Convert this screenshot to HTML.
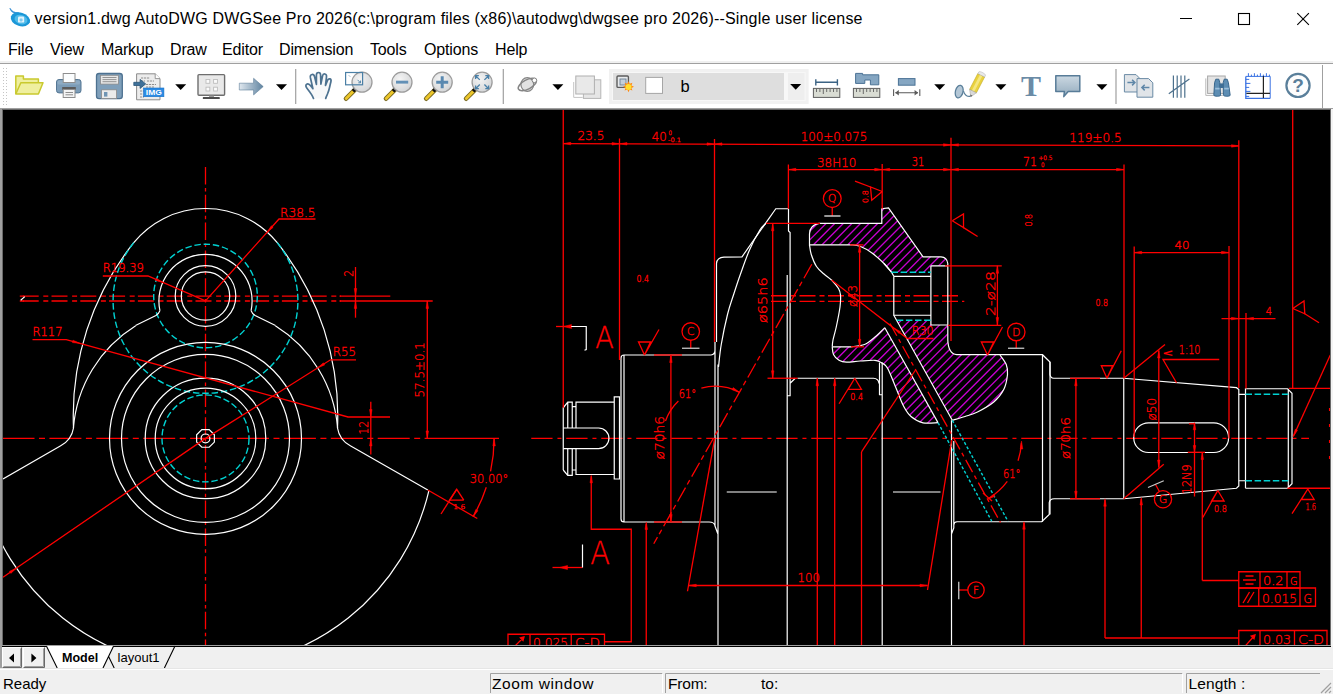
<!DOCTYPE html>
<html><head><meta charset="utf-8"><title>version1.dwg AutoDWG DWGSee Pro 2026</title>
<style>
html,body{margin:0;padding:0;width:1333px;height:694px;overflow:hidden;background:#fff;font-family:"Liberation Sans",sans-serif;color:#000}
#app{position:absolute;left:0;top:0;width:1333px;height:694px;overflow:hidden;background:#fff}
.abs{position:absolute;white-space:nowrap}
#title{left:34.5px;top:10px;font-size:16px;line-height:18px;letter-spacing:0.18px}
.menu span{position:absolute;top:41px;font-size:16px;line-height:18px;white-space:nowrap;letter-spacing:-0.15px}
#tbline{left:0;top:63px;width:1333px;height:1px;background:#a0a0a0}
#toolbar{left:0;top:64px;width:1333px;height:43px;background:#fff}
#tbshadow{display:none}
#canvasbg{left:0;top:108px;width:1333px;height:538px;background:#000}
#tabbar{left:0;top:645px;width:1333px;height:23px;background:#f0f0f0}
#status{left:0;top:668px;width:1333px;height:26px;background:#f0f0f0}
.st{position:absolute;font-size:15.5px;line-height:18px;top:675px;white-space:nowrap}
svg{position:absolute;left:0;top:0}
</style></head><body>
<div id="app">
<div id="title" class="abs">version1.dwg AutoDWG DWGSee Pro 2026(c:\program files (x86)\autodwg\dwgsee pro 2026)--Single user license</div>
<div class="menu">
<span style="left:8px">File</span><span style="left:50px">View</span><span style="left:101px">Markup</span><span style="left:170px">Draw</span><span style="left:222px">Editor</span><span style="left:279px">Dimension</span><span style="left:370px">Tools</span><span style="left:424px">Options</span><span style="left:495px">Help</span>
</div>
<div id="tbline" class="abs"></div>
<div id="toolbar" class="abs"></div>
<div id="tbshadow" class="abs"></div>
<div id="canvasbg" class="abs"></div>
<div id="tabbar" class="abs"></div>
<div id="status" class="abs"></div>
<span class="st" style="left:3px;font-size:15px">Ready</span>
<span class="st" style="left:492px;letter-spacing:0.58px">Zoom window</span>
<span class="st" style="left:668px;letter-spacing:-0.2px">From:</span>
<span class="st" style="left:761px">to:</span>
<span class="st" style="left:1188.5px;letter-spacing:0.1px">Length :</span>
<svg id="cad" width="1333" height="694" viewBox="0 0 1333 694" fill="none" stroke-width="1.3" font-family="'DejaVu Sans Light','DejaVu Sans','Liberation Sans',sans-serif" font-weight="200">
<clipPath id="cv"><rect x="3" y="110" width="1327.5" height="535"/></clipPath>
<g clip-path="url(#cv)">
<g id="left-view">
<line x1="205.5" y1="167" x2="205.5" y2="645" stroke="#ff0000" stroke-dasharray="17.5 3.4 3.5 3.4"/>
<path d="M22.7,296.1H341M22.7,301H341" stroke="#ff0000" stroke-dasharray="16 4.6 5 3.2"/>
<path d="M19.8,296.1H24M19.8,301H24" stroke="#ff0000"/>
<line x1="340" y1="296.1" x2="390.3" y2="296.1" stroke="#ff0000"/>
<line x1="340" y1="301" x2="432.7" y2="301" stroke="#ff0000"/>
<line x1="20.7" y1="300.2" x2="24.8" y2="296.6" stroke="#ffffff" stroke-width="1.2"/>
<line x1="2.5" y1="438.4" x2="442" y2="438.4" stroke="#ff0000" stroke-dasharray="32 4.5 6 4.4"/>
<line x1="442" y1="438.4" x2="499" y2="438.4" stroke="#ff0000"/>
<circle cx="205.5" cy="296" r="24.2" stroke="#ffffff" stroke-width="1.2"/>
<circle cx="205.5" cy="296" r="30.3" stroke="#ffffff" stroke-width="1.2"/>
<circle cx="205.5" cy="296" r="51.8" stroke="#00d2d2" stroke-dasharray="6.5 2.8" stroke-width="1.4"/>
<path d="M159.92,310.59A46.6,46.6 0 1 1 251.08,310.59" stroke="#ffffff" stroke-width="1.2"/>
<path d="M159.92,310.59Q158.92,313.59 155.92,315.59L135.5,325.5" stroke="#ffffff" stroke-width="1.2"/>
<path d="M251.08,310.59Q252.08,313.59 255.08,315.59L275.5,325.5" stroke="#ffffff" stroke-width="1.2"/>
<path d="M135.68,325.79A132.5,132.5 0 0 0 73.41,427.99" stroke="#ffffff" stroke-width="1.2"/>
<path d="M275.32,325.79A132.5,132.5 0 0 1 337.59,427.99" stroke="#ffffff" stroke-width="1.2"/>
<path d="M73.5,428A278.0,278.0 0 0 1 133.77,242.66A92.4,92.4 0 0 1 277.23,242.66A278.0,278.0 0 0 1 337.5,428" stroke="#ffffff" stroke-width="1.2"/>
<path d="M133.77,242.66A92.4,92.4 0 1 0 277.23,242.66" stroke="#00d2d2" stroke-dasharray="6.5 2.8" stroke-width="1.4"/>
<path d="M337.5,428Q339.5,440 350.3,445.8L427.8,490" stroke="#ffffff" stroke-width="1.2"/>
<path d="M73.5,428Q71.5,440 60.7,445.8L3,479" stroke="#ffffff" stroke-width="1.2"/>
<path d="M428.96,490.27A229.4,229.4 0 0 1 -17.96,490.27" stroke="#ffffff" stroke-width="1.2"/>
<circle cx="205.5" cy="438.4" r="96" stroke="#ffffff" stroke-width="1.2"/>
<circle cx="205.5" cy="438.4" r="84" stroke="#ffffff" stroke-width="1.2"/>
<circle cx="205.5" cy="438.4" r="60.3" stroke="#ffffff" stroke-width="1.2"/>
<circle cx="205.5" cy="438.4" r="50.3" stroke="#ffffff" stroke-width="1.2"/>
<circle cx="205.5" cy="438.4" r="43.5" stroke="#00d2d2" stroke-dasharray="6.5 2.8" stroke-width="1.4"/>
<circle cx="205.5" cy="438.4" r="4.4" stroke="#ffffff" stroke-width="1.2"/>
<polygon points="214.37,434.73 209.17,429.53 201.83,429.53 196.63,434.73 196.63,442.07 201.83,447.27 209.17,447.27 214.37,442.07" stroke="#ffffff" stroke-width="1.2"/>
<polyline points="315.5,219 279,219 205.5,300.9" stroke="#ff0000"/>
<polygon points="267.21,232.13 271.29,225.72 273.15,227.39" fill="#ff0000" stroke="#ff0000" stroke-width="0.5"/>
<text x="280" y="216.5" font-size="12.8" fill="#ff0000" stroke="#ff0000" stroke-width="0.35" textLength="35.5" lengthAdjust="spacingAndGlyphs">R38.5</text>
<polyline points="102.8,276 148,276 205.5,300.9" stroke="#ff0000"/>
<polygon points="162.74,282.38 155.36,280.55 156.35,278.25" fill="#ff0000" stroke="#ff0000" stroke-width="0.5"/>
<text x="102.8" y="272.3" font-size="11.5" fill="#ff0000" stroke="#ff0000" stroke-width="0.35" textLength="41" lengthAdjust="spacingAndGlyphs">R19.39</text>
<polyline points="32.5,339.6 66.25,339.6 348,417 390,417" stroke="#ff0000"/>
<polygon points="79.93,343.36 72.37,342.58 73.03,340.17" fill="#ff0000" stroke="#ff0000" stroke-width="0.5"/>
<text x="32.5" y="336" font-size="11.5" fill="#ff0000" stroke="#ff0000" stroke-width="0.35" textLength="30" lengthAdjust="spacingAndGlyphs">R117</text>
<polyline points="356,359.8 330.5,359.8 205.5,438.4 3,577.3" stroke="#ff0000"/>
<polygon points="317.67,367.87 323.35,362.82 324.68,364.93" fill="#ff0000" stroke="#ff0000" stroke-width="0.5"/>
<polygon points="16.33,568.16 10.85,573.43 9.43,571.37" fill="#ff0000" stroke="#ff0000" stroke-width="0.5"/>
<text x="332.8" y="356" font-size="12.5" fill="#ff0000" stroke="#ff0000" stroke-width="0.35" textLength="23.2" lengthAdjust="spacingAndGlyphs">R55</text>
<line x1="355.5" y1="267" x2="355.5" y2="317.7" stroke="#ff0000"/>
<polygon points="355.5,296 354.25,288.5 356.75,288.5" fill="#ff0000" stroke="#ff0000" stroke-width="0.5"/>
<polygon points="355.5,300.9 356.75,308.4 354.25,308.4" fill="#ff0000" stroke="#ff0000" stroke-width="0.5"/>
<text x="353" y="276.8" font-size="12.5" fill="#ff0000" stroke="#ff0000" stroke-width="0.35" textLength="6.8" lengthAdjust="spacingAndGlyphs" transform="rotate(-90 353 276.8)">2</text>
<line x1="427.3" y1="300.9" x2="427.3" y2="438.4" stroke="#ff0000"/>
<polygon points="427.3,300.9 428.55,308.4 426.05,308.4" fill="#ff0000" stroke="#ff0000" stroke-width="0.5"/>
<polygon points="427.3,438.4 426.05,430.9 428.55,430.9" fill="#ff0000" stroke="#ff0000" stroke-width="0.5"/>
<text x="424.3" y="397.5" font-size="12.5" fill="#ff0000" stroke="#ff0000" stroke-width="0.35" textLength="55.3" lengthAdjust="spacingAndGlyphs" transform="rotate(-90 424.3 397.5)">57.5±0.1</text>
<line x1="370.8" y1="401.7" x2="370.8" y2="454.5" stroke="#ff0000"/>
<polygon points="370.8,417 369.55,409.5 372.05,409.5" fill="#ff0000" stroke="#ff0000" stroke-width="0.5"/>
<polygon points="370.8,438.4 372.05,445.9 369.55,445.9" fill="#ff0000" stroke="#ff0000" stroke-width="0.5"/>
<text x="367.5" y="434.5" font-size="13" fill="#ff0000" stroke="#ff0000" stroke-width="0.35" textLength="13.7" lengthAdjust="spacingAndGlyphs" transform="rotate(-90 367.5 434.5)">12</text>
<line x1="427.8" y1="490" x2="477.3" y2="518.5" stroke="#ff0000"/>
<path d="M494.1,438.4A156.5,156.5 0 0 1 490.57,471.47" stroke="#ff0000"/>
<path d="M486.27,487.28A156.5,156.5 0 0 1 473.13,516.65" stroke="#ff0000"/>
<polygon points="494.1,438.4 495.35,445.9 492.85,445.9" fill="#ff0000" stroke="#ff0000" stroke-width="0.5"/>
<polygon points="473.13,516.65 475.8,509.53 477.97,510.78" fill="#ff0000" stroke="#ff0000" stroke-width="0.5"/>
<text x="469.8" y="483.3" font-size="12.5" fill="#ff0000" stroke="#ff0000" stroke-width="0.35" textLength="38.5" lengthAdjust="spacingAndGlyphs">30.00°</text>
<polyline points="463.8,500.2 449.5,500.2 456.7,489.3 463.8,500.2" stroke="#ff0000"/>
<line x1="456.7" y1="489.3" x2="441" y2="514" stroke="#ff0000"/>
<text x="453.3" y="508.8" font-size="6.5" fill="#ff0000" stroke="#ff0000" stroke-width="0.35" textLength="12" lengthAdjust="spacingAndGlyphs">1.6</text>
</g>
<g id="right-view">
<line x1="531.25" y1="438.4" x2="1309" y2="438.4" stroke="#ff0000" stroke-dasharray="21.3 4.9 4 4.8"/>
<path d="M771,295.75H962M771,301.3H964.3" stroke="#ff0000" stroke-dasharray="16 4 5 3.5"/>
<path d="M563.25,470V407.75L567.75,402.2H572.25V428M572.25,448.7V475.3H567.75L563.25,470M567.75,402.2V428M567.75,448.7V475.3M572.25,406.7H576M572.25,470H576M576,428V402.2H614.25M576,448.7V474.5H614.25M614.25,396.8H619.5V479H614.25Z" stroke="#ffffff" stroke-width="1.2"/>
<path d="M563.25,428H598.6A10.35,10.35 0 0 1 598.6,448.7H563.25" stroke="#ffffff" stroke-width="1.2"/>
<path d="M621,519V358Q621,355 624,355H711Q715,354.5 715,350V342M621,519Q621,522 624,522H709Q714.5,522 715,526L717.8,533.7M624,355V522M715,342V526M718,364.5V645" stroke="#ffffff" stroke-width="1.2"/>
<path d="M788.5,208.75H775.8L742,256.8L724,257.2Q717,257.6 716.5,263.5V342" stroke="#ffffff" stroke-width="1.2"/>
<path d="M766,223.3C765,224.38 762.75,225.35 760,229.8C757.25,234.25 752.75,242.63 749.5,250C746.25,257.37 743.12,266.67 740.5,274C737.88,281.33 735.97,287.25 733.8,294C731.63,300.75 729.59,306.08 727.5,314.5C725.41,322.92 722.75,335.75 721.25,344.5C719.75,353.25 718.96,363.25 718.5,367" stroke="#ffffff" stroke-width="1.2"/>
<path d="M788.5,208.75V231L790.1,232.5V395.75H787.2M787.2,275V645M790.1,383.3L795.3,378.25" stroke="#ffffff" stroke-width="1.2"/>
<path d="M797.5,378.25H873.5Q878.3,378.6 878.9,382.8L879.5,384M879.5,362.5V394.75H882.2M882.2,362.5V645" stroke="#ffffff" stroke-width="1.2"/>
<clipPath id="hc"><path d="M812,227Q809.5,229.5 809.5,234V244.8H851L851,244.8C852.5,245.05 856.5,244.93 860,246.3C863.5,247.67 868,250.13 872,253C876,255.87 880.75,260.3 884,263.5C887.25,266.7 890.25,270.75 891.5,272.2H930.9V265.8H947.8V263.5Q947,257.2 941,256.8H923L888.5,208L881.8,208.75V223.3H819.5Q815,223.6 812,227Z"/><path d="M832.25,346.8H851L851,346.8C853.25,346.42 860.5,346.13 864.5,344.5C868.5,342.87 872.25,339.17 875,337C877.75,334.83 879.37,333.05 881,331.5C882.63,329.95 884.17,328.33 884.8,327.7L938,422.6L938,422.6C935.5,422.63 927.5,423.82 923,422.8C918.5,421.78 914.25,419.3 911,416.5C907.75,413.7 906,410.75 903.5,406C901,401.25 898.5,394 896,388C893.5,382 890.33,373.83 888.5,370C886.67,366.17 886.25,366.25 885,365C883.75,363.75 882.67,363.28 881,362.5C879.33,361.72 878.5,360.55 875,360.3C871.5,360.05 864.75,360.68 860,361C855.25,361.32 850,362.32 846.5,362.2C843,362.08 841.17,361.58 839,360.3C836.83,359.02 834.62,356.75 833.5,354.5C832.38,352.25 832.46,348.08 832.25,346.8Z"/><path d="M896.2,320.2H930.9V325H947.8V340Q948.3,353.8 956.8,354.7H1000L1000,355C1001.04,356.58 1005,361.25 1006.25,364.5C1007.5,367.75 1007.92,370.33 1007.5,374.5C1007.08,378.67 1006.04,384.92 1003.75,389.5C1001.46,394.08 998.12,398.25 993.75,402C989.38,405.75 982.29,409.58 977.5,412C972.71,414.42 969.2,415.12 965,416.5C960.8,417.88 954.42,419.67 952.3,420.3Z"/></clipPath>
<path d="M593.8,430L823.8,200M602.4,430L832.4,200M611,430L841,200M619.6,430L849.6,200M628.2,430L858.2,200M636.8,430L866.8,200M645.4,430L875.4,200M654,430L884,200M662.6,430L892.6,200M671.2,430L901.2,200M679.8,430L909.8,200M688.4,430L918.4,200M697,430L927,200M705.6,430L935.6,200M714.2,430L944.2,200M722.8,430L952.8,200M731.4,430L961.4,200M740,430L970,200M748.6,430L978.6,200M757.2,430L987.2,200M765.8,430L995.8,200M774.4,430L1004.4,200M783,430L1013,200M791.6,430L1021.6,200M800.2,430L1030.2,200M808.8,430L1038.8,200M817.4,430L1047.4,200M826,430L1056,200M834.6,430L1064.6,200M843.2,430L1073.2,200M851.8,430L1081.8,200M860.4,430L1090.4,200M869,430L1099,200M877.6,430L1107.6,200M886.2,430L1116.2,200M894.8,430L1124.8,200M903.4,430L1133.4,200M912,430L1142,200M920.6,430L1150.6,200M929.2,430L1159.2,200M937.8,430L1167.8,200M946.4,430L1176.4,200M955,430L1185,200M963.6,430L1193.6,200M972.2,430L1202.2,200M980.8,430L1210.8,200M989.4,430L1219.4,200M998,430L1228,200M1006.6,430L1236.6,200M1015.2,430L1245.2,200M1023.8,430L1253.8,200M1032.4,430L1262.4,200M1041,430L1271,200M1049.6,430L1279.6,200M1058.2,430L1288.2,200M1066.8,430L1296.8,200" stroke="#c400cc" stroke-width="1.35" clip-path="url(#hc)"/>
<path d="M891.5,272.2L884,263.5" stroke="#ffffff" stroke-width="1.2"/>
<path d="M812,227Q809.5,229.5 809.5,234V244.8H851L851,244.8C852.5,245.05 856.5,244.93 860,246.3C863.5,247.67 868,250.13 872,253C876,255.87 880.75,260.3 884,263.5C887.25,266.7 890.25,270.75 891.5,272.2L893.8,276.3" stroke="#ffffff" stroke-width="1.2"/>
<path d="M812,227Q815,223.6 819.5,223.3H881.8V208.75L888.5,208L923,256.8H941Q947,257.2 947.8,263.5V340Q948.3,353.8 956.8,354.7H1042.5L1050,362V374.5Q1050.3,378 1053.75,378.25H1123.75" stroke="#ffffff" stroke-width="1.2"/>
<path d="M930.9,265.8H947.8M930.9,265.8V325H947.8M893.8,276.3H930.9M893.8,276.3V315.25H930.9" stroke="#ffffff" stroke-width="1.2"/>
<path d="M809.5,244.8C809.79,246.42 810.08,250.88 811.25,254.5C812.42,258.12 814.38,263.25 816.5,266.5C818.62,269.75 821.5,271.75 824,274C826.5,276.25 829.08,277.58 831.5,280C833.92,282.42 837,286 838.5,288.5C840,291 840.25,291.92 840.5,295C840.75,298.08 840.71,301.67 840,307C839.29,312.33 837.42,321.5 836.25,327C835.08,332.5 833.67,336.7 833,340C832.33,343.3 832.38,345.67 832.25,346.8" stroke="#ffffff" stroke-width="1.2"/>
<path d="M832.25,346.8H851L851,346.8C853.25,346.42 860.5,346.13 864.5,344.5C868.5,342.87 872.25,339.17 875,337C877.75,334.83 879.37,333.05 881,331.5C882.63,329.95 884.17,328.33 884.8,327.7" stroke="#ffffff" stroke-width="1.2"/>
<path d="M884.8,327.7L938,422.6M893.8,315.25L952.3,420.3" stroke="#ffffff" stroke-width="1.2"/>
<path d="M938,422.6L938,422.6C935.5,422.63 927.5,423.82 923,422.8C918.5,421.78 914.25,419.3 911,416.5C907.75,413.7 906,410.75 903.5,406C901,401.25 898.5,394 896,388C893.5,382 890.33,373.83 888.5,370C886.67,366.17 886.25,366.25 885,365C883.75,363.75 882.67,363.28 881,362.5C879.33,361.72 878.5,360.55 875,360.3C871.5,360.05 864.75,360.68 860,361C855.25,361.32 850,362.32 846.5,362.2C843,362.08 841.17,361.58 839,360.3C836.83,359.02 834.62,356.75 833.5,354.5C832.38,352.25 832.46,348.08 832.25,346.8" stroke="#ffffff" stroke-width="1.2"/>
<path d="M1000,355L1000,355C1001.04,356.58 1005,361.25 1006.25,364.5C1007.5,367.75 1007.92,370.33 1007.5,374.5C1007.08,378.67 1006.04,384.92 1003.75,389.5C1001.46,394.08 998.12,398.25 993.75,402C989.38,405.75 982.29,409.58 977.5,412C972.71,414.42 969.2,415.12 965,416.5C960.8,417.88 954.42,419.67 952.3,420.3" stroke="#ffffff" stroke-width="1.2"/>
<path d="M1042.5,355V521.75M1050,362V514.5M1123.75,378.25V498.75" stroke="#ffffff" stroke-width="1.2"/>
<path d="M951.5,420.3V645M953.8,441V525M951.5,534L953.8,528V525Q954,521.9 957,521.75H1041.75L1049.25,514.5V502.5Q1049.6,499 1054.25,498.75H1123.75L1236.5,488.25L1238.8,486V389.5L1236.5,387.7L1123.75,378.25" stroke="#ffffff" stroke-width="1.2"/>
<path d="M1238.8,394.3H1245.5M1238.8,480.75H1245.5M1245.5,488.25V388.75H1287.5L1292,393.25V483.75L1287.5,488.25H1245.5M1288.3,388.75V488.25" stroke="#ffffff" stroke-width="1.2"/>
<path d="M1148.6,422.8H1213.75A14.85,14.85 0 0 1 1213.75,452.5H1148.6A14.85,14.85 0 0 1 1148.6,422.8Z" stroke="#ffffff" stroke-width="1.2"/>
<line x1="726.75" y1="492" x2="776.75" y2="492" stroke="#ffffff" stroke-width="1.2"/>
<line x1="893" y1="492" x2="940.5" y2="492" stroke="#ffffff" stroke-width="1.2"/>
<line x1="891.5" y1="272.2" x2="930.9" y2="272.2" stroke="#00d2d2" stroke-dasharray="6.5 2.6" stroke-width="1.4"/>
<line x1="896.8" y1="320.2" x2="930.9" y2="320.2" stroke="#00d2d2" stroke-dasharray="6.5 2.6" stroke-width="1.4"/>
<line x1="1245.5" y1="394.3" x2="1288.3" y2="394.3" stroke="#00d2d2" stroke-dasharray="6.5 2.6" stroke-width="1.4"/>
<line x1="1245.5" y1="480.75" x2="1288.3" y2="480.75" stroke="#00d2d2" stroke-dasharray="6.5 2.6" stroke-width="1.4"/>
<line x1="938" y1="422.6" x2="991.75" y2="521.25" stroke="#00d2d2" stroke-dasharray="3 2" stroke-width="1.4"/>
<line x1="952.3" y1="420.3" x2="1008" y2="521.25" stroke="#00d2d2" stroke-dasharray="3 2" stroke-width="1.4"/>
<line x1="563.25" y1="110" x2="563.25" y2="407.75" stroke="#ff0000"/>
<line x1="619.5" y1="138.5" x2="619.5" y2="360" stroke="#ff0000"/>
<line x1="714.5" y1="139" x2="714.5" y2="342" stroke="#ff0000"/>
<line x1="788.4" y1="164.5" x2="788.4" y2="208.75" stroke="#ff0000"/>
<line x1="882.2" y1="164" x2="882.2" y2="208.75" stroke="#ff0000"/>
<line x1="951" y1="137.75" x2="951" y2="341" stroke="#ff0000"/>
<line x1="1124" y1="164.5" x2="1124" y2="378.25" stroke="#ff0000"/>
<line x1="1134.2" y1="246.5" x2="1134.2" y2="437" stroke="#ff0000"/>
<line x1="1229" y1="246" x2="1229" y2="438.4" stroke="#ff0000"/>
<line x1="1238.8" y1="140.2" x2="1238.8" y2="388" stroke="#ff0000"/>
<line x1="1246" y1="313" x2="1246" y2="388.5" stroke="#ff0000"/>
<line x1="1292.7" y1="110" x2="1292.7" y2="388.5" stroke="#ff0000"/>
<line x1="817.3" y1="378.25" x2="817.3" y2="645" stroke="#ff0000"/>
<line x1="834.7" y1="378.25" x2="834.7" y2="645" stroke="#ff0000"/>
<line x1="861.5" y1="451.8" x2="861.5" y2="645" stroke="#ff0000"/>
<line x1="646.25" y1="523.75" x2="646.25" y2="645" stroke="#ff0000"/>
<line x1="1024" y1="522.5" x2="1024" y2="645" stroke="#ff0000"/>
<line x1="1105" y1="500" x2="1105" y2="638" stroke="#ff0000"/>
<line x1="1141.25" y1="498.75" x2="1141.25" y2="638" stroke="#ff0000"/>
<line x1="1202.3" y1="452.5" x2="1202.3" y2="580.5" stroke="#ff0000"/>
<polygon points="817.3,378.25 818.55,385.75 816.05,385.75" fill="#ff0000" stroke="#ff0000" stroke-width="0.5"/>
<polygon points="834.7,378.25 835.95,385.75 833.45,385.75" fill="#ff0000" stroke="#ff0000" stroke-width="0.5"/>
<polygon points="646.25,522 647.5,529.5 645,529.5" fill="#ff0000" stroke="#ff0000" stroke-width="0.5"/>
<polygon points="1024,521.75 1025.25,529.25 1022.75,529.25" fill="#ff0000" stroke="#ff0000" stroke-width="0.5"/>
<polygon points="1105,498.75 1106.25,506.25 1103.75,506.25" fill="#ff0000" stroke="#ff0000" stroke-width="0.5"/>
<polygon points="1141.25,497.5 1142.5,505 1140,505" fill="#ff0000" stroke="#ff0000" stroke-width="0.5"/>
<line x1="772.7" y1="223.3" x2="772.7" y2="378.25" stroke="#ff0000"/>
<polygon points="772.7,223.3 773.95,230.8 771.45,230.8" fill="#ff0000" stroke="#ff0000" stroke-width="0.5"/>
<polygon points="772.7,378.25 771.45,370.75 773.95,370.75" fill="#ff0000" stroke="#ff0000" stroke-width="0.5"/>
<line x1="859.6" y1="244.8" x2="859.6" y2="346.8" stroke="#ff0000"/>
<polygon points="859.6,244.8 860.85,252.3 858.35,252.3" fill="#ff0000" stroke="#ff0000" stroke-width="0.5"/>
<polygon points="859.6,346.8 858.35,339.3 860.85,339.3" fill="#ff0000" stroke="#ff0000" stroke-width="0.5"/>
<line x1="997.4" y1="265.8" x2="997.4" y2="325" stroke="#ff0000"/>
<polygon points="997.4,265.8 998.65,273.3 996.15,273.3" fill="#ff0000" stroke="#ff0000" stroke-width="0.5"/>
<polygon points="997.4,325 996.15,317.5 998.65,317.5" fill="#ff0000" stroke="#ff0000" stroke-width="0.5"/>
<line x1="670.9" y1="355" x2="670.9" y2="522" stroke="#ff0000"/>
<polygon points="670.9,355 672.15,362.5 669.65,362.5" fill="#ff0000" stroke="#ff0000" stroke-width="0.5"/>
<polygon points="670.9,522 669.65,514.5 672.15,514.5" fill="#ff0000" stroke="#ff0000" stroke-width="0.5"/>
<line x1="1075.9" y1="378.25" x2="1075.9" y2="498.75" stroke="#ff0000"/>
<polygon points="1075.9,378.25 1077.15,385.75 1074.65,385.75" fill="#ff0000" stroke="#ff0000" stroke-width="0.5"/>
<polygon points="1075.9,498.75 1074.65,491.25 1077.15,491.25" fill="#ff0000" stroke="#ff0000" stroke-width="0.5"/>
<line x1="1070" y1="378.25" x2="1100" y2="378.25" stroke="#ff0000"/>
<line x1="1070" y1="498.75" x2="1100" y2="498.75" stroke="#ff0000"/>
<line x1="654" y1="355" x2="682" y2="355" stroke="#ff0000"/>
<line x1="654" y1="522" x2="682" y2="522" stroke="#ff0000"/>
<line x1="1158.8" y1="350.5" x2="1158.8" y2="467.5" stroke="#ff0000"/>
<polygon points="1158.8,350.5 1160.05,358 1157.55,358" fill="#ff0000" stroke="#ff0000" stroke-width="0.5"/>
<polygon points="1158.8,467.5 1157.55,460 1160.05,460" fill="#ff0000" stroke="#ff0000" stroke-width="0.5"/>
<line x1="1194.5" y1="422.8" x2="1194.5" y2="496.5" stroke="#ff0000"/>
<polygon points="1194.5,422.8 1195.75,429.8 1193.25,429.8" fill="#ff0000" stroke="#ff0000" stroke-width="0.5"/>
<polygon points="1194.5,452.5 1193.25,445.5 1195.75,445.5" fill="#ff0000" stroke="#ff0000" stroke-width="0.5"/>
<line x1="1187.8" y1="452.3" x2="1205" y2="452.3" stroke="#ff0000"/>
<line x1="1189" y1="423.8" x2="1195" y2="423.8" stroke="#ff0000"/>
<polygon points="1202.3,452.5 1203.55,459.5 1201.05,459.5" fill="#ff0000" stroke="#ff0000" stroke-width="0.5"/>
<line x1="563.25" y1="143.6" x2="1239" y2="145.9" stroke="#ff0000"/>
<polygon points="563.25,143.6 570.75,142.35 570.75,144.85" fill="#ff0000" stroke="#ff0000" stroke-width="0.5"/>
<polygon points="619.5,143.79 627,142.54 627,145.04" fill="#ff0000" stroke="#ff0000" stroke-width="0.5"/>
<polygon points="714.5,144.11 722,142.86 722,145.36" fill="#ff0000" stroke="#ff0000" stroke-width="0.5"/>
<polygon points="951,144.92 958.5,143.67 958.5,146.17" fill="#ff0000" stroke="#ff0000" stroke-width="0.5"/>
<polygon points="619.5,143.79 612,145.04 612,142.54" fill="#ff0000" stroke="#ff0000" stroke-width="0.5"/>
<polygon points="714.5,144.11 707,145.36 707,142.86" fill="#ff0000" stroke="#ff0000" stroke-width="0.5"/>
<polygon points="951,144.92 943.5,146.17 943.5,143.67" fill="#ff0000" stroke="#ff0000" stroke-width="0.5"/>
<polygon points="1239,145.9 1231.5,147.15 1231.5,144.65" fill="#ff0000" stroke="#ff0000" stroke-width="0.5"/>
<line x1="788.4" y1="169.6" x2="1124" y2="169.6" stroke="#ff0000"/>
<polygon points="788.4,169.6 795.9,168.35 795.9,170.85" fill="#ff0000" stroke="#ff0000" stroke-width="0.5"/>
<polygon points="882.2,169.6 889.7,168.35 889.7,170.85" fill="#ff0000" stroke="#ff0000" stroke-width="0.5"/>
<polygon points="951,169.6 958.5,168.35 958.5,170.85" fill="#ff0000" stroke="#ff0000" stroke-width="0.5"/>
<polygon points="882.2,169.6 874.7,170.85 874.7,168.35" fill="#ff0000" stroke="#ff0000" stroke-width="0.5"/>
<polygon points="951,169.6 943.5,170.85 943.5,168.35" fill="#ff0000" stroke="#ff0000" stroke-width="0.5"/>
<polygon points="1124,169.6 1116.5,170.85 1116.5,168.35" fill="#ff0000" stroke="#ff0000" stroke-width="0.5"/>
<line x1="1134.2" y1="252.6" x2="1229" y2="252.6" stroke="#ff0000"/>
<polygon points="1134.2,252.6 1141.7,251.35 1141.7,253.85" fill="#ff0000" stroke="#ff0000" stroke-width="0.5"/>
<polygon points="1229,252.6 1221.5,253.85 1221.5,251.35" fill="#ff0000" stroke="#ff0000" stroke-width="0.5"/>
<line x1="1221.5" y1="318.6" x2="1275.5" y2="318.6" stroke="#ff0000"/>
<polygon points="1238.8,318.6 1231.3,319.85 1231.3,317.35" fill="#ff0000" stroke="#ff0000" stroke-width="0.5"/>
<polygon points="1246,318.6 1253.5,317.35 1253.5,319.85" fill="#ff0000" stroke="#ff0000" stroke-width="0.5"/>
<line x1="766" y1="223.3" x2="820" y2="223.3" stroke="#ff0000"/>
<line x1="850" y1="244.8" x2="863.5" y2="244.8" stroke="#ff0000"/>
<line x1="945" y1="265.8" x2="1001.75" y2="265.8" stroke="#ff0000"/>
<line x1="947.8" y1="325.3" x2="1001.25" y2="325.3" stroke="#ff0000"/>
<line x1="851" y1="346.8" x2="864" y2="346.8" stroke="#ff0000"/>
<line x1="767.5" y1="378.25" x2="797.5" y2="378.25" stroke="#ff0000"/>
<line x1="688.75" y1="585.5" x2="927.5" y2="585.5" stroke="#ff0000"/>
<polygon points="688.75,585.5 696.25,584.25 696.25,586.75" fill="#ff0000" stroke="#ff0000" stroke-width="0.5"/>
<polygon points="927.5,585.5 920,586.75 920,584.25" fill="#ff0000" stroke="#ff0000" stroke-width="0.5"/>
<line x1="1289" y1="388.3" x2="1330" y2="388.3" stroke="#ff0000"/>
<line x1="1287.5" y1="488.25" x2="1330" y2="488.25" stroke="#ff0000"/>
<line x1="1105" y1="638" x2="1238.75" y2="638" stroke="#ff0000"/>
<line x1="1202.3" y1="580.5" x2="1238.75" y2="580.5" stroke="#ff0000"/>
<polyline points="591.25,476.25 591.25,529.25 631.25,529.25 631.25,641.75 604.5,641.75" stroke="#ff0000"/>
<polygon points="591.25,475.3 592.5,482.8 590,482.8" fill="#ff0000" stroke="#ff0000" stroke-width="0.5"/>
<line x1="811.8" y1="264.3" x2="653.75" y2="543.75" stroke="#ff0000" stroke-dasharray="16 4 5 3.5"/>
<line x1="714.8" y1="437.8" x2="687.5" y2="591.25" stroke="#ff0000"/>
<line x1="915.5" y1="370" x2="861.5" y2="451.8" stroke="#ff0000"/>
<line x1="951.75" y1="440" x2="927.5" y2="590" stroke="#ff0000"/>
<line x1="890" y1="323.5" x2="1000.5" y2="522.5" stroke="#ff0000" stroke-dasharray="14 4 4 4"/>
<polyline points="933.5,338.5 907.3,338.5 831.5,280" stroke="#ff0000"/>
<polygon points="893.5,327.7 900.58,331.64 899.04,333.61" fill="#ff0000" stroke="#ff0000" stroke-width="0.5"/>
<polyline points="1123.75,378.25 1165,344.5" stroke="#ff0000"/>
<polyline points="1219.25,359.5 1163,359.5 1176.5,382.75" stroke="#ff0000"/>
<polyline points="1172.5,351 1164,353.3 1172.5,355.3" stroke="#ff0000"/>
<line x1="1123.75" y1="498.75" x2="1163.75" y2="464.25" stroke="#ff0000"/>
<line x1="1329.6" y1="408" x2="1329.6" y2="470" stroke="#ff0000" stroke-dasharray="3 13"/>
<line x1="1330.3" y1="355" x2="1293.5" y2="436" stroke="#ff0000"/>
<polygon points="1293,437 1295.25,429.22 1297.52,430.28" fill="#ff0000" stroke="#ff0000" stroke-width="0.5"/>
<path d="M739.74,392.47A52.7,52.7 0 0 0 701.36,388.1" stroke="#ff0000"/>
<path d="M678.39,401.09A52.7,52.7 0 0 0 665.48,420.98" stroke="#ff0000"/>
<polygon points="739.74,392.47 732.09,389.82 733.26,387.61" fill="#ff0000" stroke="#ff0000" stroke-width="0.5"/>
<path d="M1021.4,442.69A70.5,70.5 0 0 1 1018.05,460.79" stroke="#ff0000"/>
<path d="M1007.3,481.43A70.5,70.5 0 0 1 988.36,498.79" stroke="#ff0000"/>
<polygon points="1021.5,441 1022.75,449 1020.25,449" fill="#ff0000" stroke="#ff0000" stroke-width="0.5"/>
<polygon points="987.31,499.43 993.52,494.24 994.81,496.38" fill="#ff0000" stroke="#ff0000" stroke-width="0.5"/>
<line x1="983" y1="493" x2="992" y2="501" stroke="#ff0000"/>
<line x1="556" y1="326.5" x2="571.25" y2="326.5" stroke="#ff0000"/>
<polygon points="563.5,326.5 571.5,324.5 571.5,328.5" fill="#ff0000" stroke="#ff0000" stroke-width="0.5"/>
<polyline points="571.25,326.5 586.25,326.5 586.25,349.5 584.5,350.2" stroke="#ffffff" stroke-width="1.2"/>
<line x1="552.5" y1="567.5" x2="582.5" y2="567.5" stroke="#ff0000"/>
<polygon points="559.5,567.5 567.5,565.5 567.5,569.5" fill="#ff0000" stroke="#ff0000" stroke-width="0.5"/>
<polyline points="582.5,567.5 582.5,544.5" stroke="#ffffff" stroke-width="1.2"/>
<circle cx="832.25" cy="198.6" r="8.9" stroke="#ff0000"/>
<polyline points="832.25,207.5 832.25,216" stroke="#ff0000"/>
<polyline points="824.3,216 840.5,216" stroke="#c8c8c8" stroke-width="1.3"/>
<text x="832.25" y="202.2" font-size="10.5" fill="#ff0000" stroke="#ff0000" stroke-width="0.35" text-anchor="middle">Q</text>
<circle cx="690.75" cy="331.5" r="8.75" stroke="#ff0000"/>
<polyline points="690.75,340.25 690.75,348.25" stroke="#ff0000"/>
<polyline points="682,348.25 699.5,348.25" stroke="#c8c8c8" stroke-width="1.3"/>
<text x="690.75" y="335.1" font-size="10.5" fill="#ff0000" stroke="#ff0000" stroke-width="0.35" text-anchor="middle">C</text>
<circle cx="1016.25" cy="332" r="8.75" stroke="#ff0000"/>
<polyline points="1016.25,340.75 1016.25,348.25" stroke="#ff0000"/>
<polyline points="1008,348.25 1024.25,348.25" stroke="#c8c8c8" stroke-width="1.3"/>
<text x="1016.25" y="335.6" font-size="10.5" fill="#ff0000" stroke="#ff0000" stroke-width="0.35" text-anchor="middle">D</text>
<circle cx="976" cy="590" r="8.2" stroke="#ff0000"/>
<polyline points="959,590 968,590" stroke="#ff0000"/>
<polyline points="958.75,581.75 958.75,599.25" stroke="#c8c8c8" stroke-width="1.3"/>
<text x="976" y="593.6" font-size="10.5" fill="#ff0000" stroke="#ff0000" stroke-width="0.35" text-anchor="middle">F</text>
<circle cx="1163" cy="499.3" r="8.6" stroke="#ff0000"/>
<polyline points="1155.5,484.5 1159.25,491.25" stroke="#ff0000"/>
<polyline points="1148,487.5 1163.75,480.75" stroke="#c8c8c8" stroke-width="1.3"/>
<text x="1163" y="502.9" font-size="10.5" fill="#ff0000" stroke="#ff0000" stroke-width="0.35" text-anchor="middle">G</text>
<polyline points="644.5,355 638.5,342 650.5,342 644.5,355 659,329.5" stroke="#ff0000"/>
<polyline points="987.5,355 981.3,342 993.7,342 987.5,355 1002.5,327" stroke="#ff0000"/>
<polyline points="1107,378.25 1101.3,365.75 1112.7,365.75 1107,378.25 1121.3,350.75" stroke="#ff0000"/>
<polyline points="854.75,378.25 861.45,389.45 848.05,389.45 854.75,378.25 839.05,403.75" stroke="#ff0000"/>
<polyline points="1217.8,490.5 1224.1,501 1211.5,501 1217.8,490.5 1202.8,517.5" stroke="#ff0000"/>
<polyline points="1307.8,489 1314.2,499.5 1301.4,499.5 1307.8,489 1292,513.7" stroke="#ff0000"/>
<polyline points="952.25,220.75 963.5,214 963.5,227.6 952.25,220.75" stroke="#ff0000"/>
<polyline points="963.5,227.6 977.6,236.5" stroke="#ff0000"/>
<polyline points="1292.8,308.5 1304,301 1304.8,313.75 1292.8,308.5" stroke="#ff0000"/>
<polyline points="1304.8,313.75 1319,322.75" stroke="#ff0000"/>
<polyline points="882.2,191.5 870.5,187 871.75,200.25 882.2,191.5" stroke="#ff0000"/>
<polyline points="870.5,187 855,181.2" stroke="#ff0000"/>
<polygon points="508,634.25 604.5,634.25 604.5,652 508,652" stroke="#ff0000"/>
<line x1="530" y1="634.25" x2="530" y2="652" stroke="#ff0000"/>
<line x1="571.25" y1="634.25" x2="571.25" y2="652" stroke="#ff0000"/>
<polygon points="1238.75,571.75 1300,571.75 1300,588 1238.75,588" stroke="#ff0000"/>
<line x1="1260" y1="571.75" x2="1260" y2="588" stroke="#ff0000"/>
<line x1="1287" y1="571.75" x2="1287" y2="588" stroke="#ff0000"/>
<polygon points="1238.75,588 1315.5,588 1315.5,606.25 1238.75,606.25" stroke="#ff0000"/>
<line x1="1258.75" y1="588" x2="1258.75" y2="606.25" stroke="#ff0000"/>
<line x1="1300" y1="588" x2="1300" y2="606.25" stroke="#ff0000"/>
<polygon points="1238.75,630.5 1327,630.5 1327,650 1238.75,650" stroke="#ff0000"/>
<line x1="1260" y1="630.5" x2="1260" y2="650" stroke="#ff0000"/>
<line x1="1294.5" y1="630.5" x2="1294.5" y2="650" stroke="#ff0000"/>
<path d="M514,647L524,637M524,637l-3.6,0.8l2.6,2.6Z" stroke="#ff0000"/>
<path d="M1243.5,648L1255,635M1255,635l-3.8,1l2.8,2.8Z" stroke="#ff0000"/>
<path d="M1243,580H1256M1245.5,576H1253.5M1245.5,584H1253.5" stroke="#ff0000"/>
<path d="M1243,603L1249.5,592M1247.5,603L1254,592" stroke="#ff0000"/>
<text x="533" y="646.6" font-size="12.5" fill="#ff0000" stroke="#ff0000" stroke-width="0.35" textLength="35" lengthAdjust="spacingAndGlyphs">0.025</text>
<text x="575" y="646.6" font-size="12.5" fill="#ff0000" stroke="#ff0000" stroke-width="0.35" textLength="25" lengthAdjust="spacingAndGlyphs">C-D</text>
<text x="1263" y="584.5" font-size="12.5" fill="#ff0000" stroke="#ff0000" stroke-width="0.35" textLength="20.5" lengthAdjust="spacingAndGlyphs">0.2</text>
<text x="1290" y="584.5" font-size="11" fill="#ff0000" stroke="#ff0000" stroke-width="0.35" textLength="7.5" lengthAdjust="spacingAndGlyphs">G</text>
<text x="1262" y="602.5" font-size="12.5" fill="#ff0000" stroke="#ff0000" stroke-width="0.35" textLength="35" lengthAdjust="spacingAndGlyphs">0.015</text>
<text x="1303.5" y="602.5" font-size="11.5" fill="#ff0000" stroke="#ff0000" stroke-width="0.35" textLength="8.5" lengthAdjust="spacingAndGlyphs">G</text>
<text x="1263" y="643.6" font-size="12.5" fill="#ff0000" stroke="#ff0000" stroke-width="0.35" textLength="28" lengthAdjust="spacingAndGlyphs">0.03</text>
<text x="1298" y="643.6" font-size="12.5" fill="#ff0000" stroke="#ff0000" stroke-width="0.35" textLength="26" lengthAdjust="spacingAndGlyphs">C-D</text>
<text x="577.5" y="140.3" font-size="12.6" fill="#ff0000" stroke="#ff0000" stroke-width="0.35" textLength="26.8" lengthAdjust="spacingAndGlyphs">23.5</text>
<text x="651.75" y="140.6" font-size="12.6" fill="#ff0000" stroke="#ff0000" stroke-width="0.35" textLength="15" lengthAdjust="spacingAndGlyphs">40</text>
<text x="668.5" y="135" font-size="6" fill="#ff0000" stroke="#ff0000" stroke-width="0.35" textLength="3.5" lengthAdjust="spacingAndGlyphs">0</text>
<text x="668" y="141.5" font-size="6" fill="#ff0000" stroke="#ff0000" stroke-width="0.35" textLength="13" lengthAdjust="spacingAndGlyphs">-0.1</text>
<text x="800.75" y="141.3" font-size="12.6" fill="#ff0000" stroke="#ff0000" stroke-width="0.35" textLength="66.5" lengthAdjust="spacingAndGlyphs">100±0.075</text>
<text x="1069.25" y="142.3" font-size="12.6" fill="#ff0000" stroke="#ff0000" stroke-width="0.35" textLength="52.5" lengthAdjust="spacingAndGlyphs">119±0.5</text>
<text x="817" y="167" font-size="12.5" fill="#ff0000" stroke="#ff0000" stroke-width="0.35" textLength="39.3" lengthAdjust="spacingAndGlyphs">38H10</text>
<text x="911.75" y="166" font-size="12.5" fill="#ff0000" stroke="#ff0000" stroke-width="0.35" textLength="12.5" lengthAdjust="spacingAndGlyphs">31</text>
<text x="1023" y="166" font-size="12.5" fill="#ff0000" stroke="#ff0000" stroke-width="0.35" textLength="14" lengthAdjust="spacingAndGlyphs">71</text>
<text x="1038.5" y="160" font-size="6" fill="#ff0000" stroke="#ff0000" stroke-width="0.35" textLength="14" lengthAdjust="spacingAndGlyphs">+0.5</text>
<text x="1041" y="166.5" font-size="6" fill="#ff0000" stroke="#ff0000" stroke-width="0.35" textLength="3.5" lengthAdjust="spacingAndGlyphs">0</text>
<text x="1174.5" y="248.8" font-size="10.6" fill="#ff0000" stroke="#ff0000" stroke-width="0.35" textLength="15" lengthAdjust="spacingAndGlyphs">40</text>
<text x="1265.8" y="315.3" font-size="10" fill="#ff0000" stroke="#ff0000" stroke-width="0.35" textLength="6.2" lengthAdjust="spacingAndGlyphs">4</text>
<text x="1178.75" y="354.3" font-size="12" fill="#ff0000" stroke="#ff0000" stroke-width="0.35" textLength="21.8" lengthAdjust="spacingAndGlyphs">1:10</text>
<text x="1095.5" y="305.8" font-size="9.5" fill="#ff0000" stroke="#ff0000" stroke-width="0.35" textLength="12.6" lengthAdjust="spacingAndGlyphs">0.8</text>
<text x="636.4" y="282" font-size="8.5" fill="#ff0000" stroke="#ff0000" stroke-width="0.35" textLength="12.5" lengthAdjust="spacingAndGlyphs">0.4</text>
<text x="850.3" y="400" font-size="8.5" fill="#ff0000" stroke="#ff0000" stroke-width="0.35" textLength="12.7" lengthAdjust="spacingAndGlyphs">0.4</text>
<text x="1214" y="511.5" font-size="9.5" fill="#ff0000" stroke="#ff0000" stroke-width="0.35" textLength="12.8" lengthAdjust="spacingAndGlyphs">0.8</text>
<text x="1305.5" y="510" font-size="9.5" fill="#ff0000" stroke="#ff0000" stroke-width="0.35" textLength="10.5" lengthAdjust="spacingAndGlyphs">1.6</text>
<text x="767.3" y="323" font-size="11.6" fill="#ff0000" stroke="#ff0000" stroke-width="0.35" textLength="45.6" lengthAdjust="spacingAndGlyphs" transform="rotate(-90 767.3 323)">ø65h6</text>
<text x="664.3" y="459.5" font-size="12" fill="#ff0000" stroke="#ff0000" stroke-width="0.35" textLength="43.5" lengthAdjust="spacingAndGlyphs" transform="rotate(-90 664.3 459.5)">ø70h6</text>
<text x="857" y="307" font-size="11.5" fill="#ff0000" stroke="#ff0000" stroke-width="0.35" textLength="22" lengthAdjust="spacingAndGlyphs" transform="rotate(-90 857 307)">ø43</text>
<text x="994.8" y="316" font-size="12" fill="#ff0000" stroke="#ff0000" stroke-width="0.35" textLength="45" lengthAdjust="spacingAndGlyphs" transform="rotate(-90 994.8 316)">2-ø28</text>
<text x="1069.8" y="459" font-size="11.6" fill="#ff0000" stroke="#ff0000" stroke-width="0.35" textLength="42" lengthAdjust="spacingAndGlyphs" transform="rotate(-90 1069.8 459)">ø70h6</text>
<text x="1156" y="420.5" font-size="12" fill="#ff0000" stroke="#ff0000" stroke-width="0.35" textLength="22.7" lengthAdjust="spacingAndGlyphs" transform="rotate(-90 1156 420.5)">ø50</text>
<text x="1190.8" y="494.3" font-size="12" fill="#ff0000" stroke="#ff0000" stroke-width="0.35" textLength="30" lengthAdjust="spacingAndGlyphs" transform="rotate(-90 1190.8 494.3)">12N9</text>
<text x="911.8" y="334.8" font-size="12.5" fill="#ff0000" stroke="#ff0000" stroke-width="0.35" textLength="21.7" lengthAdjust="spacingAndGlyphs">R30</text>
<text x="678.8" y="398" font-size="11.8" fill="#ff0000" stroke="#ff0000" stroke-width="0.35" textLength="17.2" lengthAdjust="spacingAndGlyphs">61°</text>
<text x="1003" y="477.5" font-size="12.5" fill="#ff0000" stroke="#ff0000" stroke-width="0.35" textLength="17.5" lengthAdjust="spacingAndGlyphs">61°</text>
<text x="797.5" y="582" font-size="12.3" fill="#ff0000" stroke="#ff0000" stroke-width="0.35" textLength="22.5" lengthAdjust="spacingAndGlyphs">100</text>
<text x="595.2" y="347.5" font-size="31" fill="#ff0000" stroke="#ff0000" stroke-width="0.35" textLength="18.6" lengthAdjust="spacingAndGlyphs">A</text>
<text x="590.3" y="563.75" font-size="31.5" fill="#ff0000" stroke="#ff0000" stroke-width="0.35" textLength="19.7" lengthAdjust="spacingAndGlyphs">A</text>
<text x="868.3" y="203" font-size="7.5" fill="#ff0000" stroke="#ff0000" stroke-width="0.35" textLength="12.8" lengthAdjust="spacingAndGlyphs" transform="rotate(-90 868.3 203)">0.8</text>
<text x="1031.5" y="226.5" font-size="9.5" fill="#ff0000" stroke="#ff0000" stroke-width="0.35" textLength="12.5" lengthAdjust="spacingAndGlyphs" transform="rotate(-90 1031.5 226.5)">0.8</text>
</g>
</g>
</svg>
<svg id="chrome" width="1333" height="694" viewBox="0 0 1333 694" font-family="'Liberation Sans',sans-serif">
<defs>
<linearGradient id="gArrow" x1="0" x2="1" y1="0" y2="0"><stop offset="0" stop-color="#dfe7ee"/><stop offset="1" stop-color="#5f83a0"/></linearGradient>
<linearGradient id="gBub" x1="0" x2="0" y1="0" y2="1"><stop offset="0" stop-color="#cbd8e2"/><stop offset="1" stop-color="#93abbd"/></linearGradient>
<radialGradient id="gLens" cx="0.4" cy="0.35" r="0.7"><stop offset="0" stop-color="#f4f4f4"/><stop offset="1" stop-color="#d2d4d6"/></radialGradient>
<g id="dd"><path d="M0,0h11l-5.5,5.8z" fill="#000"/></g>
<g id="mag"><!-- lens centre at 0,0 -->
<path d="M-7.2,7.6L-16,16.5" stroke="#7a6a20" stroke-width="4.6" stroke-linecap="round"/>
<path d="M-8,8.4L-15.8,16.3" stroke="#ecc62a" stroke-width="2.8" stroke-linecap="round"/>
<path d="M-6.6,6.6L-9,9" stroke="#111" stroke-width="3.6"/>
<circle r="10" fill="url(#gLens)" stroke="#9c9c9c" stroke-width="1.3"/>
</g>
</defs>
<!-- title bar icon -->
<g id="appicon">
<path d="M10,8.3C11.6,11.4 14.6,12.8 18.6,12.9C14.8,14.2 11.2,12.6 10,8.3Z" fill="#2f8ad2" stroke="#2f8ad2" stroke-width="0.8"/>
<ellipse cx="20.4" cy="19.4" rx="9.9" ry="6.7" transform="rotate(17 20.4 19.4)" fill="#1b97d7"/>
<ellipse cx="21" cy="19.6" rx="6.6" ry="4.6" transform="rotate(17 21 19.6)" fill="#4fbbea"/>
<rect x="18" y="16.6" width="6.2" height="6" rx="1.2" fill="#e4f3fb"/>
<rect x="19.6" y="18.6" width="3" height="2.8" rx="0.8" fill="#7fcaf0"/>
</g>
<!-- window controls -->
<path d="M1180,18.5h12" stroke="#000" stroke-width="1"/>
<rect x="1238.5" y="13.5" width="11" height="11" fill="none" stroke="#000" stroke-width="1.1"/>
<path d="M1297.3,13.2l11.6,11.6M1308.9,13.2l-11.6,11.6" stroke="#000" stroke-width="1.1"/>
<!-- toolbar frame -->
<rect x="0" y="61" width="1333" height="2" fill="#f0f0f0"/>
<rect x="0" y="63" width="1333" height="1" fill="#a0a0a0"/>
<rect x="1322" y="65" width="1" height="43" fill="#a0a0a0"/>
<g fill="#c6c6c6"><!-- gripper -->
<path d="M3,68h1v1h-1zM6,68h1v1h-1zM3,71h1v1h-1zM6,71h1v1h-1zM3,74h1v1h-1zM6,74h1v1h-1zM3,77h1v1h-1zM6,77h1v1h-1zM3,80h1v1h-1zM6,80h1v1h-1zM3,83h1v1h-1zM6,83h1v1h-1zM3,86h1v1h-1zM6,86h1v1h-1zM3,89h1v1h-1zM6,89h1v1h-1zM3,92h1v1h-1zM6,92h1v1h-1zM3,95h1v1h-1zM6,95h1v1h-1zM3,98h1v1h-1zM6,98h1v1h-1zM3,101h1v1h-1zM6,101h1v1h-1zM3,104h1v1h-1zM6,104h1v1h-1z"/>
</g>
<!-- separators -->
<path d="M295.7,69v35M503.3,69v35M1116,69v35" stroke="#a0a0a0" stroke-width="1.2"/>
<!-- folder -->
<g id="i-open" stroke="#c9c92e" stroke-width="1.5" stroke-linejoin="round" fill="#efef9f">
<path d="M15.8,94V76h7.6v3h15v4"/>
<path d="M15.8,94L20.8,82.8H43L38.4,94Z"/>
</g>
<!-- printer -->
<g id="i-print">
<rect x="56.5" y="79.5" width="24.5" height="13.4" rx="2.5" fill="#7c9cb7" stroke="#557794" stroke-width="1"/>
<rect x="57.5" y="80.5" width="22.5" height="4" rx="1.5" fill="#8eabc3"/>
<rect x="63.2" y="73.5" width="11.8" height="9" fill="#fbfdfe" stroke="#8e8e8e" stroke-width="1"/>
<rect x="62.2" y="87" width="13.6" height="3" fill="#5b5b5b"/>
<rect x="63.2" y="89.5" width="11.8" height="8" fill="#f4f4f4" stroke="#8e8e8e" stroke-width="1"/>
<path d="M65.5,92.5h7.5M65.5,94.8h7.5" stroke="#8e8e8e" stroke-width="1"/>
</g>
<!-- floppy -->
<g id="i-save">
<rect x="96.5" y="73.5" width="25.8" height="25.2" rx="2.6" fill="#7f9fba" stroke="#4d7190" stroke-width="1.3"/>
<rect x="100.5" y="75.3" width="18" height="8.8" fill="#e6e6e6" stroke="#8a8a8a" stroke-width="0.8"/>
<path d="M102.5,77.5h14M102.5,79.6h14M102.5,81.7h14" stroke="#8a8a8a" stroke-width="0.9"/>
<rect x="101.6" y="89.8" width="15" height="8.7" fill="#ebebeb" stroke="#8a8a8a" stroke-width="0.8"/>
<rect x="104" y="92" width="3.4" height="4.6" fill="#7095b4"/>
</g>
<!-- export IMG -->
<g id="i-img">
<path d="M136.6,73.8h18.6l4.8,4.8v21.2h-23.4z" fill="#ececec" stroke="#8c8c8c" stroke-width="1"/>
<path d="M155.2,73.8v4.8h4.8" fill="#fff" stroke="#8c8c8c" stroke-width="0.9"/>
<path d="M141,78h9M141,81h4M147,81h7M146,84.5h10M146,87h8M140,91h4M140,94h3M140,97h4" stroke="#8e8e8e" stroke-width="1" stroke-dasharray="2.2 0.8"/>
<path d="M133.8,82.3h6.3v-2.9l5.6,4.5l-5.6,4.5v-2.9h-6.3z" fill="#3f7099" stroke="#2a5578" stroke-width="0.8"/>
<rect x="143.6" y="88" width="20.3" height="8.7" fill="#2b8be3" stroke="#1670c8" stroke-width="0.6"/>
<text x="153.8" y="95.3" font-size="8" font-weight="bold" fill="#fff" text-anchor="middle" textLength="16" lengthAdjust="spacingAndGlyphs">IMG</text>
</g>
<use href="#dd" x="175.2" y="84.2"/>
<!-- monitor -->
<g id="i-mon">
<rect x="198" y="74.6" width="26.6" height="20.6" rx="1" fill="#e9e9e9" stroke="#6e6e6e" stroke-width="1.4"/>
<rect x="209" y="95.6" width="5" height="1.8" fill="#9a9a9a"/>
<rect x="202.8" y="97.1" width="17" height="2" rx="0.6" fill="#4c4c4c"/>
<g fill="#fbfbfb" stroke="#bdbdbd" stroke-width="0.9"><rect x="206" y="79.5" width="3.8" height="3.8"/><rect x="213.6" y="79.5" width="3.8" height="3.8"/><rect x="206" y="87.2" width="3.8" height="3.8"/><rect x="213.6" y="87.2" width="3.8" height="3.8"/></g>
</g>
<!-- arrow -->
<path id="i-arrow" d="M239.3,83.2h14.3v-4.9l9.6,8.3l-9.6,8.3v-4.9h-14.3z" fill="url(#gArrow)" stroke="#557794" stroke-width="0.7" stroke-opacity="0.8"/>
<use href="#dd" x="276" y="84.2"/>
<!-- hand -->
<g id="i-hand" fill="#f7f8f9" stroke="#4d7290" stroke-width="1.7" stroke-linejoin="round" stroke-linecap="round">
<path d="M313.5,98.5c-1.2,-3.5 -3.2,-6 -6,-9.5c-1.6,-2 -2.2,-3.6 -1,-4.6c1.4,-1.1 3.3,-0.1 5.2,2.6l1.2,1.7l-2.5,-11c-0.4,-2 0.4,-3 1.6,-3.2c1.2,-0.2 2.2,0.6 2.6,2.4l1.8,7.5l0,-9.3c0,-1.7 0.8,-2.6 2.1,-2.6c1.3,0 2.1,0.9 2.1,2.6l0.3,9l1.6,-8c0.3,-1.6 1.2,-2.3 2.4,-2.1c1.2,0.2 1.8,1.2 1.6,2.8l-1,8.6l2,-5c0.6,-1.4 1.5,-1.9 2.5,-1.5c1,0.4 1.3,1.4 0.9,2.9c-1.5,5.5 -1.5,8 -3.4,12.2c-0.8,1.8 -1.4,3 -1.8,4.5"/>
</g>
<!-- zoom tools -->
<g id="i-zwin"><use href="#mag" x="362" y="82.2"/><rect x="345.6" y="72.5" width="17" height="12.3" fill="none" stroke="#4a7fa5" stroke-width="1.2"/><path d="M349,75.5l1,1M357.5,79.8l3,3m0,-2.2v2.2h-2.2" stroke="#4a7fa5" stroke-width="0.9" fill="none"/></g>
<g id="i-zout"><use href="#mag" x="402" y="82.2"/><rect x="396" y="80.7" width="12.2" height="2.9" fill="#6290b6"/></g>
<g id="i-zin"><use href="#mag" x="442.2" y="82.2"/><path d="M436.2,82.2h12M442.2,76.2v12" stroke="#5a89b0" stroke-width="3"/></g>
<g id="i-zext"><use href="#mag" x="482.1" y="82.2"/><g stroke="#4a80a8" stroke-width="1.3" fill="none"><path d="M479.8,79.9l-4.2,-4.2m0,3.3v-3.3h3.3M484.4,79.9l4.2,-4.2m-3.3,0h3.3v3.3M479.8,84.5l-4.2,4.2m0,-3.3v3.3h3.3M484.4,84.5l4.2,4.2m-3.3,0h3.3v-3.3"/></g></g>
<!-- orbit -->
<g id="i-orbit" fill="none" stroke="#858585">
<ellipse cx="527.3" cy="84.5" rx="6.4" ry="6.8" fill="#e2e2e2" stroke-width="1.2"/>
<ellipse cx="527.3" cy="84.5" rx="10" ry="4.6" transform="rotate(-28 527.3 84.5)" stroke-width="1.5"/>
<circle cx="534.4" cy="80.3" r="2.3" fill="#fff" stroke-width="1"/>
</g>
<use href="#dd" x="552.4" y="84.2"/>
<!-- layers -->
<g id="i-layers"><rect x="583.4" y="79.8" width="17.4" height="18.6" fill="#e6e6e6" stroke="#b6b6b6"/><path d="M573.7,82v15.4h9" stroke="#c4c4c4" fill="none"/><rect x="575.8" y="76" width="18.6" height="18" fill="#e9e9e9" stroke="#b0b0b0"/></g>
<!-- combo -->
<rect x="609" y="69" width="199.6" height="35" fill="#f1f1f1"/>
<rect x="612" y="72" width="193.6" height="29" fill="#f7f7f7"/>
<rect x="613" y="73" width="171" height="27" fill="#dedede"/>
<rect x="788" y="73" width="16.5" height="27" fill="#eeeeee"/>
<use href="#dd" x="790.2" y="84"/>
<g id="i-lay2"><rect x="617" y="76" width="11.4" height="11.4" rx="1" fill="#e8eaec" stroke="#5c5c5c" stroke-width="1.4"/><rect x="620" y="79" width="6" height="6" fill="#c3cfdb" stroke="#6d7f92" stroke-width="0.9"/>
<path d="M628.5,81.2l1.2,2.6l2.7,-1l-1,2.7l2.6,1.2l-2.6,1.2l1,2.7l-2.7,-1l-1.2,2.6l-1.2,-2.6l-2.7,1l1,-2.7l-2.6,-1.2l2.6,-1.2l-1,-2.7l2.7,1z" fill="#ff8a10"/><circle cx="628.5" cy="87" r="3" fill="#ffdf30"/></g>
<rect x="645.7" y="77.4" width="16.8" height="16" fill="#fff" stroke="#a6a6a6" stroke-width="1"/>
<text x="680.6" y="92.4" font-size="16.5" fill="#000">b</text>
<!-- ruler 1 -->
<g id="i-r1"><rect x="813.4" y="88.4" width="26.4" height="9" fill="#d9dcd3" stroke="#5e5e5e" stroke-width="1"/><path d="M816.5,89v3M819.9,89v3M823.3,89v5M826.7,89v3M830.1,89v3M833.5,89v3M836.9,89v3" stroke="#5e5e5e" stroke-width="0.9"/><path d="M815.8,82.3h21.6M815.8,79.2v6.3M837.4,79.2v6.3" stroke="#3b6384" stroke-width="1.4"/></g>
<!-- ruler 2 -->
<g id="i-r2"><rect x="853.4" y="88.4" width="26.4" height="9" fill="#d9dcd3" stroke="#5e5e5e" stroke-width="1"/><path d="M856.5,89v3M859.9,89v3M863.3,89v5M866.7,89v3M870.1,89v3M873.5,89v3M876.9,89v3" stroke="#5e5e5e" stroke-width="0.9"/><path d="M855.6,73.4h7v1.4h16.2v10h-8.4v-4.8h-5.6v3.4h-9.2z" fill="#85a6c2" stroke="#4a7295" stroke-width="1"/></g>
<!-- dim icon -->
<g id="i-dim"><rect x="898.4" y="78.6" width="16.6" height="6.6" fill="#85a6c2" stroke="#4a7295" stroke-width="1"/><path d="M893.6,89.3v6.8M919.8,89.3v6.8M895.4,92.7h22.6" stroke="#5a5a5a" stroke-width="1.1" fill="none"/><path d="M895.2,92.7l3.6,-2.7v5.4zM918.2,92.7l-3.6,-2.7v5.4z" fill="#5a5a5a"/></g>
<use href="#dd" x="934.2" y="84.2"/>
<!-- pencil -->
<g id="i-pen"><path d="M963.5,91c0.8,4 4,6 7.2,5.2" fill="none" stroke="#5a7f9a" stroke-width="1.2"/><ellipse cx="959.2" cy="91.6" rx="3.8" ry="6.4" transform="rotate(14 959.2 91.6)" fill="#b4c7d6" stroke="#5a7f9a" stroke-width="1.3"/>
<path d="M977.8,73.6l6.8,3.4l-8.2,15.8l-6.8,-3.4z" fill="#ead23e" stroke="#c0a820" stroke-width="0.6"/><path d="M980,74.7l2.4,1.2l-8.2,15.8l-2.4,-1.2z" fill="#f4e682"/><path d="M977.8,73.6l6.8,3.4l0.9,-1.8c0.4,-0.9 -4.9,-4.3 -6.6,-3.4z" fill="#e9e9e9" stroke="#aaa" stroke-width="0.5"/><path d="M969.6,89.4l6.8,3.4l-5.6,4z" fill="#d9d9d9" stroke="#9a9a9a" stroke-width="0.5"/><path d="M970.2,94.6l2.2,1.1l-1.6,1.1z" fill="#555"/></g>
<use href="#dd" x="995.4" y="84.2"/>
<text x="1031" y="95.6" font-family="'Liberation Serif',serif" font-weight="bold" font-size="30" fill="#6b8ba6" text-anchor="middle">T</text>
<!-- bubble -->
<path id="i-bub" d="M1055.8,75.8h24v15.8h-11.6l-4.4,5l0.6,-5h-8.6z" fill="url(#gBub)" stroke="#587c98" stroke-width="1.5" stroke-linejoin="round"/>
<use href="#dd" x="1096.4" y="84.2"/>
<!-- compare -->
<g id="i-cmp" stroke="#6a8aa5" stroke-width="1" fill="#e0e4e8"><path d="M1124.4,74.6h11.6l4.2,4.2v13.2h-15.8z"/><path d="M1137,78.6h11.6l4.2,4.2v14.4h-15.8z"/><g fill="none" stroke="#5f87a8" stroke-width="1.5"><path d="M1127.4,82.6h7.5m-2.8,-2.8l2.8,2.8l-2.8,2.8"/><path d="M1149.4,87.6h-7.5m2.8,-2.8l-2.8,2.8l2.8,2.8"/></g></g>
<!-- tally -->
<path id="i-tally" d="M1173.4,75.4v22.4M1177.2,75.4v22.4M1181,75.4v22.4M1184.8,75.4v22.4M1168.8,93.8l20.6,-14.8" stroke="#4c708c" stroke-width="1.2" fill="none"/>
<!-- binoculars -->
<g id="i-bino"><rect x="1207.6" y="76" width="17.6" height="17.4" fill="#e4e4e4" stroke="#a8a8a8"/><path d="M1205.8,78.4v17h17" fill="none" stroke="#b8b8b8"/>
<path d="M1214.6,82.6l1.2,-3.4h3l1,3.4l0.8,12.6c0,1.4 -6.6,1.4 -6.8,0zM1223.2,82.6l1,-3.4h3l1.2,3.4l1.8,12.6c0,1.4 -6.6,1.4 -6.8,0z" fill="#5d8db3" stroke="#2f5f86" stroke-width="0.9"/><rect x="1219.4" y="83.4" width="4.6" height="4.6" fill="#3f6f96"/><path d="M1215.2,88.6h4.4M1224.2,88.6h4.6" stroke="#9cc0dc" stroke-width="1.6"/></g>
<!-- ruler frame -->
<g id="i-rf" fill="none"><path d="M1245.8,76.4v22h24.4" stroke="#3a72e2" stroke-width="1.3"/><path d="M1245.8,76.4h24.4v22" stroke="#3a72e2" stroke-width="1"/><path d="M1248.4,73.2v3.2M1251.4,74.6v1.8M1254.4,73.2v3.2M1257.4,74.6v1.8M1260.4,73.2v3.2M1263.4,74.6v1.8M1266.4,73.2v3.2M1269.4,74.6v1.8M1245.8,79.4h3.4M1245.8,83.4h4.6M1245.8,87.4h3.4M1245.8,91.4h4.6M1245.8,96.4h3.4" stroke="#3a72e2" stroke-width="1"/><path d="M1263.4,76v22M1246.4,93.4h23.6" stroke="#222" stroke-width="1.2"/></g>
<!-- help -->
<circle cx="1298" cy="85.4" r="11.6" fill="#fdfdfd" stroke="#5a7f9a" stroke-width="2.2"/>
<text x="1298" y="92.4" font-size="19" font-weight="bold" fill="#5a7f9a" text-anchor="middle">?</text>
<!-- canvas sunken border -->
<rect x="0" y="108" width="1333" height="1" fill="#a0a0a0"/><rect x="0" y="109" width="1331" height="1" fill="#696969"/>
<rect x="0" y="109" width="2" height="559" fill="#a0a0a0"/><rect x="2" y="110" width="1" height="535" fill="#696969"/>
<rect x="1330" y="110" width="1" height="536" fill="#696969"/><rect x="1331" y="109" width="2" height="537" fill="#f4f4f4"/>
<!-- tab bar -->
<rect x="2" y="645" width="1329" height="1" fill="#a0a0a0"/><rect x="2" y="646" width="1329" height="1" fill="#000"/>
<path d="M46.4,646L57.2,668H103L113.6,646Z" fill="#fff"/>
<path d="M46.4,646L57.2,668M113.6,646L103,668M108.6,656.6L114.2,668M175,646L164.4,668" stroke="#000" stroke-width="1.1" fill="none"/>
<g id="tabbtns"><rect x="2" y="647" width="20" height="21" fill="#f0f0f0"/><path d="M2.5,667.5V647.5H21" stroke="#fff" fill="none"/><path d="M21.5,647.5V667.5H2.5" stroke="#696969" fill="none"/><path d="M20.5,648.5V666.5H3.5" stroke="#a0a0a0" fill="none"/>
<rect x="23" y="647" width="22" height="21" fill="#f0f0f0"/><path d="M23.5,667.5V647.5H44" stroke="#fff" fill="none"/><path d="M44.5,647.5V667.5H23.5" stroke="#696969" fill="none"/><path d="M43.5,648.5V666.5H24.5" stroke="#a0a0a0" fill="none"/>
<path d="M9,658l5,-4.6v9.2zM36.4,658l-5,-4.6v9.2z" fill="#000"/></g>
<text x="62" y="661.7" font-size="13" font-weight="bold" fill="#000" textLength="36.2" lengthAdjust="spacingAndGlyphs">Model</text>
<text x="117.6" y="661.7" font-size="13" fill="#000" textLength="42" lengthAdjust="spacingAndGlyphs">layout1</text>
<!-- status panes -->
<g fill="none"><path d="M490.5,693V673.5H662.5" stroke="#a0a0a0"/><path d="M662.5,673.5V693" stroke="#fff"/>
<path d="M665.5,693V673.5H1182.5" stroke="#a0a0a0"/><path d="M1182.5,673.5V693" stroke="#fff"/>
<path d="M1186.5,693V673.5H1320" stroke="#a0a0a0"/></g>
<path d="M1331,683l-10,10M1331,687l-6,6M1331,691l-2,2" stroke="#a0a0a0" stroke-width="1.2"/>
<rect x="0" y="668" width="1333" height="1" fill="#e6e6e6"/><rect x="0" y="669" width="1333" height="1" fill="#ffffff"/>
</svg>

</div>
</body></html>
